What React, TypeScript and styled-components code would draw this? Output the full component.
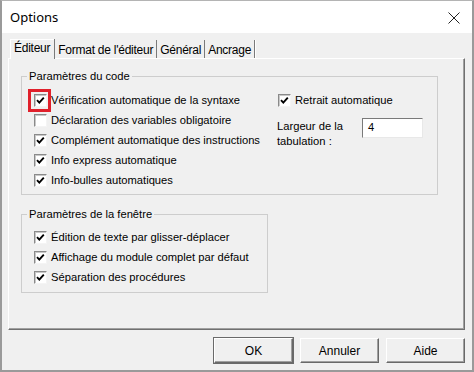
import React from "react";
import styled, { createGlobalStyle } from "styled-components";

const GlobalStyle = createGlobalStyle`
  html, body {
    margin: 0;
    padding: 0;
    background: #ffffff;
  }
  body {
    font-family: "Liberation Sans", Arial, sans-serif;
    font-size: 12px;
    color: #000;
  }
`;

type Opt = { label: string; checked: boolean; marked?: boolean };

const codeOptions: Opt[] = [
  { label: "Vérification automatique de la syntaxe", checked: true, marked: true },
  { label: "Déclaration des variables obligatoire", checked: false },
  { label: "Complément automatique des instructions", checked: true },
  { label: "Info express automatique", checked: true },
  { label: "Info-bulles automatiques", checked: true },
];

const windowOptions: Opt[] = [
  { label: "Édition de texte par glisser-déplacer", checked: true },
  { label: "Affichage du module complet par défaut", checked: true },
  { label: "Séparation des procédures", checked: true },
];

const tabs = ["Éditeur", "Format de l'éditeur", "Général", "Ancrage"];

function CheckBox({ checked, marked }: { checked: boolean; marked?: boolean }) {
  return (
    <Box>
      {checked && (
        <svg width="9" height="9" viewBox="0 0 9 9">
          <path d="M1 4.2 L3.3 6.6 L7.8 1.6" fill="none" stroke="#000" strokeWidth="1.9" />
        </svg>
      )}
      {marked && <Highlight />}
    </Box>
  );
}

function CheckRow({ label, checked, marked }: Opt) {
  return (
    <Row>
      <CheckBox checked={checked} marked={marked} />
      <RowLabel>{label}</RowLabel>
    </Row>
  );
}

export default function App() {
  return (
    <>
      <GlobalStyle />
      <Window>
        <TitleBar>
          <Title>Options</Title>
          <Close>
            <svg width="12" height="12" viewBox="0 0 12 12">
              <path d="M0.5 0.5 L11.5 11.5 M11.5 0.5 L0.5 11.5" stroke="#222" strokeWidth="1" />
            </svg>
          </Close>
        </TitleBar>

        <Body>
          <TabRow>
            {tabs.map((t, i) => (
              <Tab key={t} $active={i === 0}>
                {t}
              </Tab>
            ))}
          </TabRow>

          <Panel>
            <CodeGroup>
              <Legend>Paramètres du code</Legend>
              <Columns>
                <List $width={244}>
                  {codeOptions.map((o) => (
                    <CheckRow key={o.label} {...o} />
                  ))}
                </List>
                <Side>
                  <CheckRow label="Retrait automatique" checked />
                  <TabWidth>
                    <TabLabel>
                      Largeur de la
                      <br />
                      tabulation :
                    </TabLabel>
                    <Field>4</Field>
                  </TabWidth>
                </Side>
              </Columns>
            </CodeGroup>

            <WindowGroup>
              <Legend>Paramètres de la fenêtre</Legend>
              <List>
                {windowOptions.map((o) => (
                  <CheckRow key={o.label} {...o} />
                ))}
              </List>
            </WindowGroup>
          </Panel>

          <Buttons>
            <Button $default>OK</Button>
            <Button>Annuler</Button>
            <Button>Aide</Button>
          </Buttons>
        </Body>
      </Window>
    </>
  );
}

const Window = styled.div`
  width: 474px;
  height: 372px;
  box-sizing: border-box;
  background: #f0f0f0;
  border: 2px solid #9a9a9a;
  border-top: 1px solid #b4b4b4;
  display: flex;
  flex-direction: column;
`;

const TitleBar = styled.div`
  height: 32px;
  background: #ffffff;
  display: flex;
  align-items: center;
  justify-content: space-between;
  padding: 0 12px 0 8px;
`;

const Title = styled.span`
  font-family: "Noto Sans", sans-serif;
  font-size: 13px;
  color: #000;
`;

const Close = styled.span`
  display: flex;
  margin-top: 1px;
`;

const Body = styled.div`
  flex: 1;
  padding: 6px 7px 0 6px;
  display: flex;
  flex-direction: column;
`;

const TabRow = styled.div`
  display: flex;
  height: 19px;
  padding-left: 2px;
`;

const Tab = styled.div<{ $active?: boolean }>`
  box-sizing: border-box;
  padding: ${(p) => (p.$active ? "2px 4px 0 4px" : "3px 3px 0 3px")};
  margin-top: ${(p) => (p.$active ? "0" : "1px")};
  margin-bottom: ${(p) => (p.$active ? "-1px" : "0")};
  height: ${(p) => (p.$active ? "20px" : "18px")};
  font-size: 12px;
  letter-spacing: -0.25px;
  white-space: nowrap;
  border-right: 1px solid #7a7a7a;
  box-shadow: ${(p) => (p.$active ? "inset 1px 1px 0 #ffffff" : "1px 0 0 #ffffff")};
  background: #f0f0f0;
  position: relative;
  z-index: ${(p) => (p.$active ? 1 : 0)};
`;

const Panel = styled.div`
  height: 272px;
  box-sizing: border-box;
  border-top: 1px solid #ffffff;
  border-left: 1px solid #ffffff;
  border-right: 1px solid #707070;
  border-bottom: 1px solid #707070;
  box-shadow: inset -1px -1px 0 #a0a0a0;
  padding: 10px 0 0 12px;
  display: flex;
  flex-direction: column;
  gap: 12px;
`;

const Group = styled.fieldset`
  margin: 0;
  padding: 0 0 0 12px;
  min-width: 0;
  border: 1px solid #cdcdcd;
  box-sizing: border-box;
`;

const CodeGroup = styled(Group)`
  width: 417px;
  height: 126px;
  padding-top: 7px;
`;

const WindowGroup = styled(Group)`
  width: 247px;
  height: 86px;
  padding-top: 6px;
`;

const Legend = styled.legend`
  padding: 0 2px;
  margin-left: -7px;
  font-size: 11.2px;
  line-height: 14px;
`;

const Columns = styled.div`
  display: flex;
`;

const List = styled.div<{ $width?: number }>`
  display: flex;
  flex-direction: column;
  flex: none;
  width: ${(p) => (p.$width ? `${p.$width}px` : "auto")};
`;

const Side = styled.div`
  display: flex;
  flex-direction: column;
`;

const Row = styled.div`
  height: 20px;
  display: flex;
  align-items: center;
  gap: 4px;
  white-space: nowrap;
`;

const RowLabel = styled.span`
  font-size: 11.2px;
`;

const Box = styled.span`
  position: relative;
  width: 13px;
  height: 13px;
  box-sizing: border-box;
  background: #ffffff;
  border-top: 1px solid #8a8a8a;
  border-left: 1px solid #8a8a8a;
  border-right: 1px solid #f4f4f4;
  border-bottom: 1px solid #f4f4f4;
  box-shadow: inset 1px 1px 0 #c8c8c8;
  display: flex;
  align-items: center;
  justify-content: center;
  flex: none;
`;

const Highlight = styled.span`
  position: absolute;
  left: -7px;
  top: -6px;
  width: 23px;
  height: 23px;
  box-sizing: border-box;
  border: 3px solid #e0202b;
`;

const TabWidth = styled.div`
  display: flex;
  align-items: flex-start;
  margin-top: 8px;
`;

const TabLabel = styled.div`
  width: 85px;
  font-size: 11.2px;
  line-height: 15px;
  margin-top: 1px;
  margin-left: -1px;
`;

const Field = styled.div`
  width: 61px;
  height: 20px;
  box-sizing: border-box;
  background: #ffffff;
  border-top: 1px solid #7a7a7a;
  border-left: 1px solid #7a7a7a;
  border-right: 1px solid #e8e8e8;
  border-bottom: 1px solid #e8e8e8;
  padding: 2px 0 0 5px;
  font-size: 11.2px;
`;

const Buttons = styled.div`
  display: flex;
  justify-content: flex-end;
  gap: 7px;
  padding: 8px 0 0 0;
`;

const Button = styled.div<{ $default?: boolean }>`
  width: 79px;
  height: 25px;
  box-sizing: border-box;
  display: flex;
  align-items: center;
  justify-content: center;
  font-size: 12px;
  background: #f0f0f0;
  border-top: 1px solid #ffffff;
  border-left: 1px solid #ffffff;
  border-right: 1px solid #696969;
  border-bottom: 1px solid #696969;
  box-shadow: ${(p) =>
    p.$default
      ? "0 0 0 1px #6a6a6a, inset -1px -1px 0 #a0a0a0"
      : "inset -1px -1px 0 #a0a0a0"};
`;
